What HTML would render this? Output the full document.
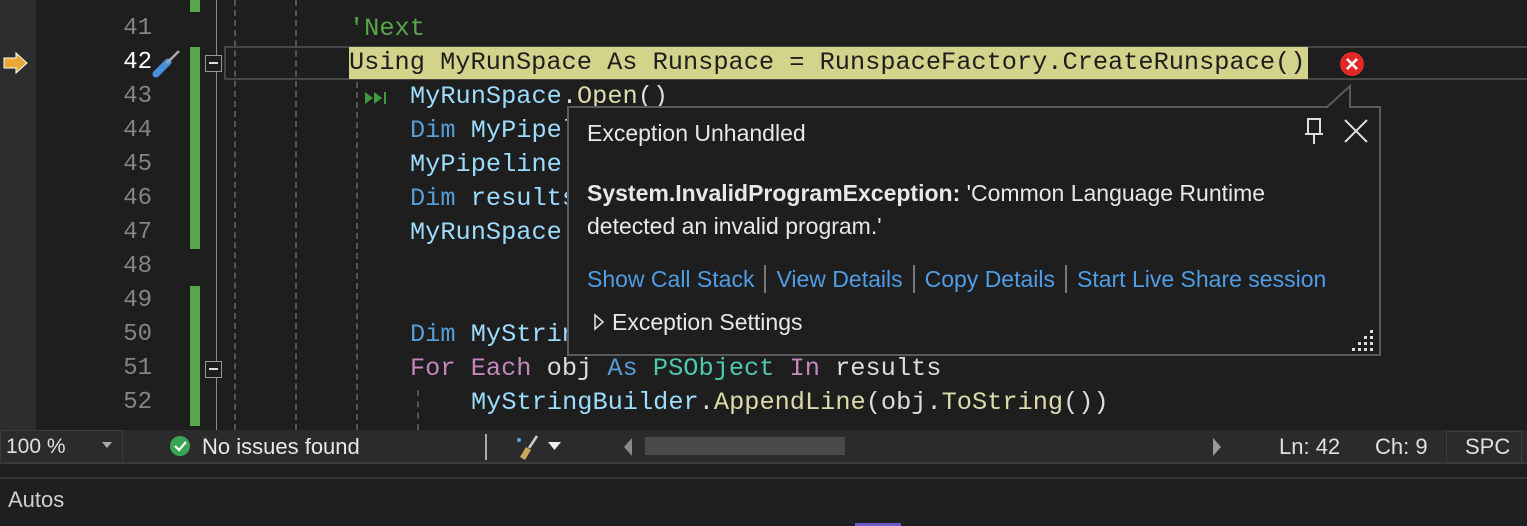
<!DOCTYPE html>
<html><head><meta charset="utf-8"><style>
*{margin:0;padding:0;box-sizing:border-box}
body{width:1527px;height:526px;background:#1e1e1e;overflow:hidden;position:relative;font-family:"Liberation Sans",sans-serif}
.abs{position:absolute}
.code{position:absolute;font-family:"Liberation Mono",monospace;font-size:25.3px;line-height:34px;white-space:pre;color:#dcdcdc}
.ln{position:absolute;left:100px;width:52px;text-align:right;font-family:"Liberation Mono",monospace;font-size:24px;line-height:34px;color:#858585}
.k{color:#569cd6}.t{color:#4ec9b0}.v{color:#9cdcfe}.m{color:#dcdcaa}.c{color:#57a64a}.p{color:#c586c0}
.dash{position:absolute;width:0;border-left:2px dashed #555}
.pop{font-size:23px;color:#e8e8e8;white-space:nowrap}
.lk{color:#4e9de6}
.sep{display:inline-block;width:2px;height:28px;background:#777;vertical-align:-6px;margin:0 10px 0 10px}
</style></head><body>
<div class="abs" style="left:0;top:0;width:36px;height:430px;background:#2d2d2d"></div>
<svg class="abs" style="left:2px;top:51px" width="28" height="24"><path d="M2 7h12V2l11 10-11 10v-5H2z" fill="#e8a838" stroke="#fff" stroke-width="1"/></svg>
<div class="ln" style="top:-22px">40</div>
<div class="ln" style="top:12px">41</div>
<div class="ln" style="top:46px;color:#fff">42</div>
<div class="ln" style="top:80px">43</div>
<div class="ln" style="top:114px">44</div>
<div class="ln" style="top:148px">45</div>
<div class="ln" style="top:182px">46</div>
<div class="ln" style="top:216px">47</div>
<div class="ln" style="top:250px">48</div>
<div class="ln" style="top:284px">49</div>
<div class="ln" style="top:318px">50</div>
<div class="ln" style="top:352px">51</div>
<div class="ln" style="top:386px">52</div>
<svg class="abs" style="left:150px;top:46px" width="36" height="34"><path d="M6 28l12-12" stroke="#4a8fd9" stroke-width="7" stroke-linecap="round"/><path d="M17 17l12-12" stroke="#aaa" stroke-width="2.5"/></svg>
<div class="abs" style="left:190px;top:0;width:10px;height:12px;background:#57a64a"></div>
<div class="abs" style="left:190px;top:47px;width:10px;height:202px;background:#57a64a"></div>
<div class="abs" style="left:190px;top:286px;width:10px;height:140px;background:#57a64a"></div>
<div class="abs" style="left:216px;top:0;width:1px;height:430px;background:#8a8a8a"></div>
<div class="abs" style="left:205px;top:55px;width:17px;height:17px;border:1.5px solid #999;background:#1e1e1e"><div style="margin:6px 3px;height:2px;background:#ddd"></div></div>
<div class="abs" style="left:205px;top:361px;width:17px;height:17px;border:1.5px solid #999;background:#1e1e1e"><div style="margin:6px 3px;height:2px;background:#ddd"></div></div>
<div class="dash" style="left:234px;top:0;height:430px"></div>
<div class="dash" style="left:295px;top:0;height:430px"></div>
<div class="dash" style="left:356px;top:82px;height:348px"></div>
<div class="dash" style="left:417px;top:390px;height:40px"></div>
<div class="abs" style="left:224px;top:46px;width:1310px;height:34px;border:2px solid #464646"></div>
<div class="abs" style="left:349px;top:47px;width:959px;height:32px;background:#d4d38c"></div>
<div class="code" style="left:349px;top:12px"><span class="c">'Next</span></div>
<div class="code" style="left:349px;top:46px;color:#1e1e1e">Using MyRunSpace As Runspace = RunspaceFactory.CreateRunspace()</div>
<div class="code" style="left:410px;top:80px"><span class="v">MyRunSpace</span>.<span class="m">Open</span>()</div>
<svg class="abs" style="left:364px;top:90px" width="30" height="16"><path d="M1 2l8 6-8 6zM10 2l8 6-8 6z" fill="#3d9a3d"/><rect x="20" y="2" width="2" height="12" fill="#3d9a3d"/></svg>
<div class="code" style="left:410px;top:114px"><span class="k">Dim</span> <span class="v">MyPipeline</span></div>
<div class="code" style="left:410px;top:148px"><span class="v">MyPipeline</span></div>
<div class="code" style="left:410px;top:182px"><span class="k">Dim</span> <span class="v">results</span></div>
<div class="code" style="left:410px;top:216px"><span class="v">MyRunSpace</span></div>
<div class="code" style="left:410px;top:318px"><span class="k">Dim</span> <span class="v">MyString</span></div>
<div class="code" style="left:410px;top:352px"><span class="p">For Each</span> obj <span class="k">As</span> <span class="t">PSObject</span> <span class="p">In</span> results</div>
<div class="code" style="left:471px;top:386px"><span class="v">MyStringBuilder</span>.<span class="m">AppendLine</span>(obj.<span class="m">ToString</span>())</div>
<svg class="abs" style="left:1339px;top:51px" width="26" height="26"><circle cx="13" cy="13" r="12" fill="#e02828"/><path d="M8 8l10 10M18 8L8 18" stroke="#fff" stroke-width="2.5"/></svg>
<div class="abs" style="left:567px;top:106px;width:814px;height:250px;background:#1e1e1e;border:2px solid #5a5a5a"></div>
<svg class="abs" style="left:1320px;top:82px" width="40" height="30"><path d="M6 26L30 4v22" fill="#1e1e1e" stroke="#5a5a5a" stroke-width="2"/><rect x="5" y="26" width="30" height="4" fill="#1e1e1e"/></svg>
<div class="abs pop" style="left:587px;top:120px">Exception Unhandled</div>
<svg class="abs" style="left:1303px;top:116px" width="24" height="30"><rect x="5" y="3" width="12" height="15" fill="none" stroke="#ddd" stroke-width="2"/><path d="M2 18h18M11 18v10" stroke="#ddd" stroke-width="2"/></svg>
<svg class="abs" style="left:1342px;top:117px" width="28" height="28"><path d="M3 3l22 22M25 3L3 25" stroke="#ddd" stroke-width="2"/></svg>
<div class="abs pop" style="left:587px;top:177px;line-height:33px;width:780px"><b>System.InvalidProgramException:</b> 'Common Language Runtime<br>detected an invalid program.'</div>
<div class="abs pop" style="left:587px;top:265px"><span class="lk">Show Call Stack</span><span class="sep"></span><span class="lk">View Details</span><span class="sep"></span><span class="lk">Copy Details</span><span class="sep"></span><span class="lk">Start Live Share session</span></div>
<svg class="abs" style="left:592px;top:312px" width="14" height="20"><path d="M3 3l8 7-8 7z" fill="none" stroke="#ddd" stroke-width="1.6"/></svg>
<div class="abs pop" style="left:612px;top:309px">Exception Settings</div>
<svg class="abs" style="left:1352px;top:328px" width="24" height="24" fill="#ddd"><rect x="18" y="2" width="3" height="3"/><rect x="12" y="8" width="3" height="3"/><rect x="18" y="8" width="3" height="3"/><rect x="6" y="14" width="3" height="3"/><rect x="12" y="14" width="3" height="3"/><rect x="18" y="14" width="3" height="3"/><rect x="0" y="20" width="3" height="3"/><rect x="6" y="20" width="3" height="3"/><rect x="12" y="20" width="3" height="3"/><rect x="18" y="20" width="3" height="3"/></svg>
<div class="abs" style="left:0;top:430px;width:1527px;height:34px;background:#2b2b2b;border-bottom:2px solid #3a3a3a"></div>
<div class="abs" style="left:0;top:430px;width:123px;height:33px;border:1px solid #3c3c3c"></div>
<div class="abs" style="left:6px;top:435px;font-size:21px;color:#e0e0e0">100 %</div>
<svg class="abs" style="left:102px;top:442px" width="12" height="8"><path d="M0 0h10L5 6z" fill="#aaa"/></svg>
<svg class="abs" style="left:169px;top:435px" width="24" height="24"><circle cx="11" cy="11" r="10" fill="#3aa655"/><path d="M6 11l4 4 7-8" stroke="#fff" stroke-width="2.2" fill="none"/></svg>
<div class="abs" style="left:202px;top:434px;font-size:22px;color:#e8e8e8">No issues found</div>
<div class="abs" style="left:485px;top:434px;width:2px;height:26px;background:#aaa"></div>
<svg class="abs" style="left:514px;top:433px" width="30" height="28"><path d="M6 24l6-10 5 3-6 10z" fill="#c9a85a"/><path d="M15 15l8-12" stroke="#ccc" stroke-width="2.5"/><circle cx="5" cy="7" r="2" fill="#5a9de6"/></svg>
<svg class="abs" style="left:548px;top:442px" width="14" height="10"><path d="M0 0h13L6.5 8z" fill="#eee"/></svg>
<svg class="abs" style="left:622px;top:437px" width="12" height="20"><path d="M10 1L2 10l8 9z" fill="#888"/></svg>
<div class="abs" style="left:645px;top:437px;width:200px;height:18px;background:#4a4a4a"></div>
<svg class="abs" style="left:1211px;top:437px" width="12" height="20"><path d="M2 1l8 9-8 9z" fill="#999"/></svg>
<div class="abs" style="left:1279px;top:434px;font-size:22px;color:#e0e0e0">Ln: 42</div>
<div class="abs" style="left:1375px;top:434px;font-size:22px;color:#e0e0e0">Ch: 9</div>
<div class="abs" style="left:1446px;top:431px;width:76px;height:32px;border:1px solid #3c3c3c"></div>
<div class="abs" style="left:1465px;top:434px;font-size:22px;color:#e0e0e0">SPC</div>
<div class="abs" style="left:0;top:466px;width:1527px;height:12px;background:#1e1e1e"></div>
<div class="abs" style="left:0;top:477px;width:1527px;height:49px;background:#1f1f1f;border-top:2px solid #333"></div>
<div class="abs" style="left:8px;top:487px;font-size:22px;color:#cfcfcf">Autos</div>
<div class="abs" style="left:855px;top:523px;width:46px;height:3px;background:#6a5acd"></div>
</body></html>
